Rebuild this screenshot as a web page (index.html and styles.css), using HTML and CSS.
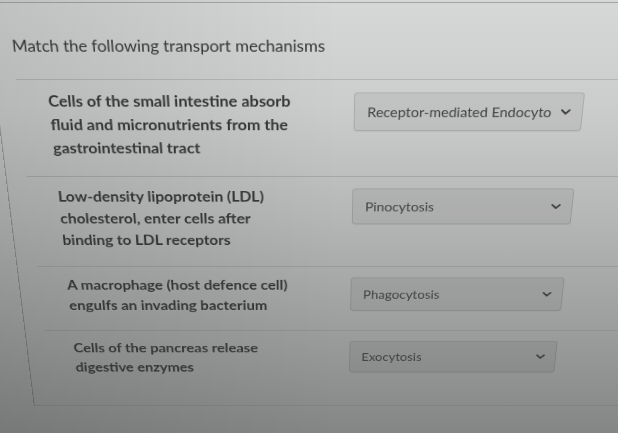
FILE: index.html
```html
<!DOCTYPE html>
<html lang="en">
<head>
<meta charset="utf-8">
<title>Matching question</title>
<link rel="stylesheet" href="styles.css">
</head>
<body>
<div class="screen">
  <section class="question">
    <div class="question-text">Match the following transport mechanisms</div>
    <div class="answers">
      <div class="answer">
        <div class="prompt">Cells of the small intestine absorb<br>fluid and micronutrients from the<br>gastrointestinal tract</div>
        <div class="select">
          <span class="value">Receptor-mediated Endocytosis</span>
          <svg class="chevron" viewBox="0 0 10 6" aria-hidden="true"><path d="M1 1l4 4 4-4"/></svg>
        </div>
      </div>
      <div class="answer">
        <div class="prompt">Low-density lipoprotein (LDL)<br>cholesterol, enter cells after<br>binding to LDL receptors</div>
        <div class="select">
          <span class="value">Pinocytosis</span>
          <svg class="chevron" viewBox="0 0 10 6" aria-hidden="true"><path d="M1 1l4 4 4-4"/></svg>
        </div>
      </div>
      <div class="answer">
        <div class="prompt">A macrophage (host defence cell)<br>engulfs an invading bacterium</div>
        <div class="select">
          <span class="value">Phagocytosis</span>
          <svg class="chevron" viewBox="0 0 10 6" aria-hidden="true"><path d="M1 1l4 4 4-4"/></svg>
        </div>
      </div>
      <div class="answer">
        <div class="prompt">Cells of the pancreas release<br>digestive enzymes</div>
        <div class="select">
          <span class="value">Exocytosis</span>
          <svg class="chevron" viewBox="0 0 10 6" aria-hidden="true"><path d="M1 1l4 4 4-4"/></svg>
        </div>
      </div>
    </div>
  </section>
</div>
</body>
</html>
```
FILE: styles.css
```css
html,
body {
  margin: 0;
  height: 100%;
  overflow: hidden;
}

body {
  font-family: Lato, "Open Sans", sans-serif;
  color: #343636;
  background:
    linear-gradient(to right, rgba(0, 0, 0, 0.1), rgba(0, 0, 0, 0) 55%),
    linear-gradient(to bottom, #d6d8d7 0%, #cbcdcc 25%, #b5b7b6 50%, #9d9f9e 75%, #848685 100%);
}

/* the page is viewed tilted back, so it recedes toward the bottom */
.screen {
  width: 720px;
  transform-origin: 323px 0;
  transform: translateX(-16px) perspective(800px) rotateX(-17deg);
}

.question {
  margin-top: 2px;
  padding-bottom: 22px;
  border: 1px solid rgba(40, 42, 41, 0.3);
  border-right: none;
}

.question-text {
  padding: 34px 22px 25px;
  font-size: 17px;
  line-height: 23px;
}

.answers {
  margin-left: 22px;
}

.answer {
  display: flex;
  align-items: flex-start;
  padding: 10px 0 20px;
  border-top: 1px solid rgba(40, 42, 41, 0.16);
}

.prompt {
  flex: 0 0 318px;
  padding-left: 31px;
  font-size: 16.9px;
  font-weight: 700;
  line-height: 27px;
}

.select {
  display: flex;
  align-items: center;
  box-sizing: border-box;
  width: 239px;
  height: 44px;
  margin-top: 4px;
  padding: 0 12px 0 13px;
  border: 1px solid rgba(40, 42, 41, 0.16);
  border-radius: 4px;
  background: rgba(0, 0, 0, 0.05);
  box-shadow: 0 1px 1px rgba(0, 0, 0, 0.06);
}

.value {
  flex: 1;
  overflow: hidden;
  white-space: nowrap;
  font-size: 15px;
  color: #404242;
}

.chevron {
  flex: 0 0 10px;
  width: 10px;
  height: 6px;
  margin-left: 10px;
  fill: none;
  stroke: #3a3c3c;
  stroke-width: 1.8;
  stroke-linecap: round;
  stroke-linejoin: round;
}
```
